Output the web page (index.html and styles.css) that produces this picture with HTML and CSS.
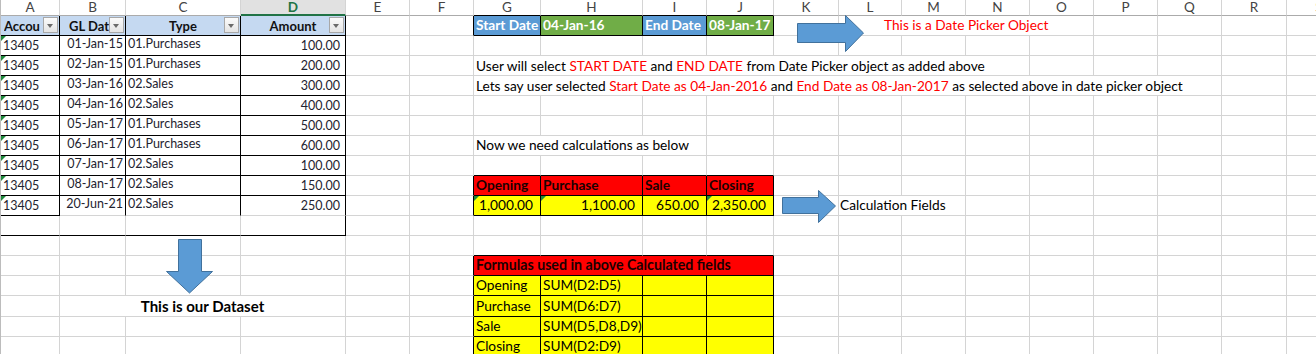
FILE: index.html
```html
<!DOCTYPE html>
<html>
<head>
<meta charset="utf-8">
<link rel="stylesheet" href="styles.css">
</head>
<body>
<div class="sheet">
  <!-- column headers -->
  <span class="ch">A</span><span class="ch">B</span><span class="ch">C</span><span class="ch sel">D</span><span class="ch">E</span><span class="ch">F</span><span class="ch kb">G</span><span class="ch kb">H</span><span class="ch kb">I</span><span class="ch kb">J</span><span class="ch">K</span><span class="ch">L</span><span class="ch">M</span><span class="ch">N</span><span class="ch">O</span><span class="ch">P</span><span class="ch">Q</span><span class="ch">R</span><span class="ch">S</span>

  <!-- row 1 -->
  <span class="th kr kb ha"><span class="hx">Accou</span><span class="fb"></span></span>
  <span class="th kr kb hb"><span class="hx">GL Dat</span><span class="fb"></span></span>
  <span class="th kr kb hc">Type<span class="fb"></span></span>
  <span class="th kr kb hc">Amount<span class="fb"></span></span>
  <span></span><span class="kr"></span>
  <span class="db kr kb">Start Date</span><span class="dg kr kb">04-Jan-16</span><span class="db kr kb">End Date</span><span class="dg kr kb">08-Jan-17</span>
  <span></span><span class="note s4">This is a Date Picker Object</span><span></span><span></span><span></span><span></span>

  <!-- row 2 -->
  <span class="t a kr kb tri">13405</span><span class="t b r kr kb">01-Jan-15</span><span class="t b kr kb">01.Purchases</span><span class="t a amt kr kb">100.00</span>
  <span></span><span></span><span></span><span></span><span></span><span></span><span></span><span></span><span></span><span></span><span></span><span></span><span></span><span></span><span></span>

  <!-- row 3 -->
  <span class="t a kr kb tri">13405</span><span class="t b r kr kb">02-Jan-15</span><span class="t b kr kb">01.Purchases</span><span class="t a amt kr kb">200.00</span>
  <span></span><span></span>
  <span class="s8 lo">User will select&nbsp;<em>START DATE</em>&nbsp;and&nbsp;<em>END DATE</em>&nbsp;from Date Picker object as added above</span>
  <span></span><span></span><span></span><span></span><span></span>

  <!-- row 4 -->
  <span class="t a kr kb tri">13405</span><span class="t b r kr kb">03-Jan-16</span><span class="t b kr kb">02.Sales</span><span class="t a amt kr kb">300.00</span>
  <span></span><span></span>
  <span class="s11 lo">Lets say user selected&nbsp;<em>Start Date as 04-Jan-2016</em>&nbsp;and&nbsp;<em>End Date as 08-Jan-2017</em>&nbsp;as selected above in date picker object</span>
  <span></span><span></span>

  <!-- row 5 -->
  <span class="t a kr kb tri">13405</span><span class="t b r kr kb">04-Jan-16</span><span class="t b kr kb">02.Sales</span><span class="t a amt kr kb">400.00</span>
  <span></span><span></span><span></span><span></span><span></span><span></span><span></span><span></span><span></span><span></span><span></span><span></span><span></span><span></span><span></span>

  <!-- row 6 -->
  <span class="t a kr kb tri">13405</span><span class="t b r kr kb">05-Jan-17</span><span class="t b kr kb">01.Purchases</span><span class="t a amt kr kb">500.00</span>
  <span></span><span></span><span></span><span></span><span></span><span></span><span></span><span></span><span></span><span></span><span></span><span></span><span></span><span></span><span></span>

  <!-- row 7 -->
  <span class="t a kr kb tri">13405</span><span class="t b r kr kb">06-Jan-17</span><span class="t b kr kb">01.Purchases</span><span class="t a amt kr kb">600.00</span>
  <span></span><span></span>
  <span class="s3">Now we need calculations as below</span>
  <span></span><span></span><span></span><span></span><span></span><span></span><span></span><span></span><span></span><span></span>

  <!-- row 8 -->
  <span class="t a kr kb tri">13405</span><span class="t b r kr kb">07-Jan-17</span><span class="t b kr kb">02.Sales</span><span class="t a amt kr kb">100.00</span>
  <span></span><span></span><span class="kb"></span><span class="kb"></span><span class="kb"></span><span class="kb"></span>
  <span></span><span></span><span></span><span></span><span></span><span></span><span></span><span></span><span></span>

  <!-- row 9 -->
  <span class="t a kr kb tri">13405</span><span class="t b r kr kb">08-Jan-17</span><span class="t b kr kb">02.Sales</span><span class="t a amt kr kb">150.00</span>
  <span></span><span class="kr"></span>
  <span class="rh kr kb">Opening</span><span class="rh kr kb">Purchase</span><span class="rh kr kb">Sale</span><span class="rh kr kb">Closing</span>
  <span></span><span></span><span></span><span></span><span></span><span></span><span></span><span></span><span></span>

  <!-- row 10 -->
  <span class="t a kr kb tri">13405</span><span class="t b r kr">20-Jun-21</span><span class="t b kr">02.Sales</span><span class="t a amt kr">250.00</span>
  <span></span><span class="kr"></span>
  <span class="yv kr kb tri">1,000.00</span><span class="yv kr kb tri">1,100.00</span><span class="yv kr kb">650.00</span><span class="yv kr kb tri">2,350.00</span>
  <span></span><span class="s2 cf">Calculation Fields</span>
  <span></span><span></span><span></span><span></span><span></span><span></span>

  <!-- row 11 -->
  <span class="kb"></span><span class="kb"></span><span class="kb"></span><span class="kr kb"></span>
  <span></span><span></span><span></span><span></span><span></span><span></span><span></span><span></span><span></span><span></span><span></span><span></span><span></span><span></span><span></span>

  <!-- row 12 -->
  <span></span><span></span><span></span><span></span><span></span><span></span>
  <span class="kb"></span><span class="kb"></span><span class="kb"></span><span class="kb"></span>
  <span></span><span></span><span></span><span></span><span></span><span></span><span></span><span></span><span></span>

  <!-- row 13 -->
  <span></span><span></span><span></span><span></span><span></span><span class="kr"></span>
  <span class="rh fh s4 kr kb">Formulas used in above Calculated fields</span>
  <span></span><span></span><span></span><span></span><span></span><span></span><span></span><span></span><span></span>

  <!-- row 14 -->
  <span></span><span></span><span></span><span></span><span></span><span class="kr"></span>
  <span class="y kr kb">Opening</span><span class="y kr kb">SUM(D2:D5)</span><span class="y kr kb"></span><span class="y kr kb"></span>
  <span></span><span></span><span></span><span></span><span></span><span></span><span></span><span></span><span></span>

  <!-- row 15 -->
  <span></span><span class="s3 ds">This is our Dataset</span>
  <span></span><span class="kr"></span>
  <span class="y kr kb">Purchase</span><span class="y kr kb">SUM(D6:D7)</span><span class="y kr kb"></span><span class="y kr kb"></span>
  <span></span><span></span><span></span><span></span><span></span><span></span><span></span><span></span><span></span>

  <!-- row 16 -->
  <span></span><span></span><span></span><span></span><span></span><span class="kr"></span>
  <span class="y kr kb">Sale</span><span class="y kr kb">SUM(D5,D8,D9)</span><span class="y kr kb"></span><span class="y kr kb"></span>
  <span></span><span></span><span></span><span></span><span></span><span></span><span></span><span></span><span></span>

  <!-- row 17 -->
  <span></span><span></span><span></span><span></span><span></span><span class="kr"></span>
  <span class="y kr kb">Closing</span><span class="y kr kb">SUM(D2:D9)</span><span class="y kr kb"></span><span class="y kr kb"></span>
  <span></span><span></span><span></span><span></span><span></span><span></span><span></span><span></span><span></span>

  <svg class="shapes" width="1316" height="354" viewBox="0 0 1316 354" aria-hidden="true">
    <polygon points="797.5,23.5 845.5,23.5 845.5,15.5 863.5,33 845.5,51.5 845.5,42.5 797.5,42.5"/>
    <polygon points="782.5,197.5 818.5,197.5 818.5,190.5 835.5,206 818.5,222.5 818.5,213.5 782.5,213.5"/>
    <polygon points="178.5,239.5 201.5,239.5 201.5,271.5 212.5,271.5 189.5,293 166.5,271.5 178.5,271.5"/>
  </svg>
</div>
</body>
</html>
```

FILE: styles.css
```css
* { box-sizing: border-box; }
html, body { margin: 0; padding: 0; background: #fff; overflow: hidden; }
body {
  font-family: Lato, "Open Sans", "DejaVu Sans", sans-serif;
  font-size: 13.7px;
  color: #000;
}
.sheet {
  position: relative;
  display: grid;
  grid-template-columns: 59px 66px 115px 105px 64px 64px 67px 102px 64px 67px 65px 63px 64px 64px 64px 64px 64px 65px 65px;
  grid-template-rows: 16px repeat(14, 20px) 21px 20px 20px;
  width: 1316px;
  height: 354px;
  overflow: hidden;
  border-left: 1px solid #bcbcbc;
}
.sheet > span {
  position: relative;
  display: flex;
  align-items: flex-end;
  min-width: 0;
  padding: 0 2px 2px;
  line-height: 16px;
  white-space: nowrap;
  border-right: 1px solid #d4d4d4;
  border-bottom: 1px solid #d4d4d4;
}
em { font-style: normal; color: #ff0000; }

/* column headers */
.sheet > .ch {
  justify-content: center;
  align-items: center;
  padding: 0;
  font-size: 13.5px;
  line-height: 15px;
  color: #444;
  border-bottom-color: #ababab;
}
.sheet > .ch.sel {
  background: #e1e1e1;
  color: #217346;
  font-weight: bold;
  border-bottom: 2px solid #217346;
}

/* black borders */
.sheet > .kr { border-right-color: #000; }
.sheet > .kb { border-bottom-color: #000; }

/* spans */
.s2 { grid-column: span 2; }
.s3 { grid-column: span 3; }
.s4 { grid-column: span 4; }
.s8 { grid-column: span 8; }
.s11 { grid-column: span 11; }
.sheet > .lo { padding-bottom: 1px; }

/* dataset table */
.sheet > .th {
  background: #c5d9f1;
  font-weight: bold;
  font-size: 13px;
  color: #111;
  padding-bottom: 1px;
  overflow: hidden;
}
.sheet > .ha { padding-left: 3px; }
.sheet > .hb { padding-left: 9px; }
.sheet > .hc { justify-content: center; }
.hx { overflow: hidden; }
.fb {
  position: absolute;
  top: 1px;
  right: 1px;
  width: 15px;
  height: 16px;
  border: 1px solid #a8a8a8;
  background: linear-gradient(#fbfbfb, #e4e4e4);
}
.fb::after {
  content: "";
  position: absolute;
  left: 3px;
  top: 6px;
  border-top: 4px solid #6a6a6a;
  border-left: 3.5px solid transparent;
  border-right: 3.5px solid transparent;
}
.sheet > .t { font-size: 12.5px; color: #1e2330; }
.sheet > .a { padding-bottom: 1px; }
.sheet > .b { padding-bottom: 3px; }
.sheet > .r { justify-content: flex-end; padding-right: 2px; }
.sheet > .amt { justify-content: flex-end; padding-right: 5px; }
.tri::before {
  content: "";
  position: absolute;
  left: 0;
  top: 0;
  border-top: 5px solid #1f8a3c;
  border-right: 5px solid transparent;
}

/* date picker cells */
.sheet > .db, .sheet > .dg { color: #fff; font-weight: bold; }
.sheet > .db { background: #5b9bd5; }
.sheet > .dg { background: #70ad47; }
.sheet > .note { color: #ff0000; padding-left: 45px; }

/* calculation tables */
.sheet > .rh { background: #ff0000; font-weight: bold; color: #1a0000; }
.sheet > .fh { font-size: 14.2px; }
.sheet > .yv { background: #ffff00; justify-content: flex-end; padding-right: 7px; }
.sheet > .y { background: #ffff00; padding-bottom: 2px; }
.sheet > .cf { padding-left: 1px; }
.sheet > .ds { justify-content: center; font-weight: bold; font-size: 15px; }

.shapes {
  position: absolute;
  left: -1px;
  top: 0;
  pointer-events: none;
}
.shapes polygon { fill: #5b9bd5; stroke: #41719c; stroke-width: 1; }
```
